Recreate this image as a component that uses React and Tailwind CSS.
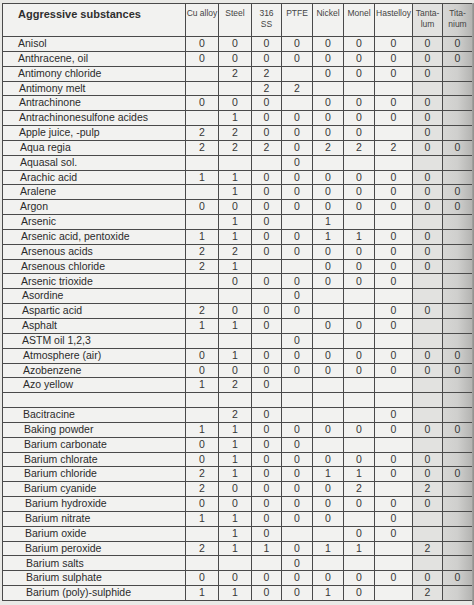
import React from "react";

const H = ["Cu alloy", "Steel", "316|SS", "PTFE", "Nickel", "Monel", "Hastelloy", "Tanta-|lum", "Tita-|nium"];

const R = [
  ["Anisol", "000000000"],
  ["Anthracene, oil", "000000000"],
  ["Antimony chloride", "_22_0000_"],
  ["Antimony melt", "__22_____"],
  ["Antrachinone", "000_0000_"],
  ["Antrachinonesulfone acides", "_1000000_"],
  ["Apple juice, -pulp", "220000_0_"],
  ["Aqua regia", "222022200"],
  ["Aquasal sol.", "___0_____"],
  ["Arachic acid", "11000000_"],
  ["Aralene", "_10000000"],
  ["Argon", "000000000"],
  ["Arsenic", "_10_1____"],
  ["Arsenic acid, pentoxide", "11001100_"],
  ["Arsenous acids", "22000000_"],
  ["Arsenous chloride", "21__0000_"],
  ["Arsenic trioxide", "_000000__"],
  ["Asordine", "___0_____"],
  ["Aspartic acid", "2000__00_"],
  ["Asphalt", "110_000__"],
  ["ASTM oil 1,2,3", "___0_____"],
  ["Atmosphere (air)", "010000000"],
  ["Azobenzene", "000000000"],
  ["Azo yellow", "120______"],
  ["", "_________"],
  ["Bacitracine", "_20___0__"],
  ["Baking powder", "110000000"],
  ["Barium carbonate", "0100_____"],
  ["Barium chlorate", "01000000_"],
  ["Barium chloride", "210011000"],
  ["Barium cyanide", "200002_2_"],
  ["Barium hydroxide", "00000000_"],
  ["Barium nitrate", "11000_0__"],
  ["Barium oxide", "_10__00__"],
  ["Barium peroxide", "211011_2_"],
  ["Barium salts", "___0_____"],
  ["Barium sulphate", "000000000"],
  ["Barium (poly)-sulphide", "110010_2_"],
];

const shade = (j) =>
  j === 7
    ? "bg-[#e2e2e0]"
    : j === 8
    ? "bg-gradient-to-r from-[#d7d7d5] via-[#cfcfcd] to-[#b4b4b2]"
    : "bg-[#f2f2f0]";

export default function App() {
  return (
    <div
      className="w-[474px] h-[605px] bg-[#e9e9e6] flex overflow-hidden"
      style={{ fontFamily: '"Liberation Sans", Arial, sans-serif' }}
    >
      <div className="ml-[2px] mt-[3px] flex">
        <div className="grid grid-cols-[183px_33px_33px_30px_31px_31px_31px_38px_30px_30px] grid-rows-[33px_repeat(38,minmax(0,1fr))] h-[598px] w-[470px] border-t border-l border-[#4a4a4a]">
          <div className="border-r border-b border-[#4a4a4a] bg-[#f2f2f0] pl-[15px] pt-[3px] text-[11px] leading-[14px] font-bold text-[#2f2f2f]">
            Aggressive substances
          </div>
          {H.map((h, j) => (
            <div
              key={h}
              className={`border-r border-b border-[#4a4a4a] ${shade(j)} pt-[4px] text-center text-[8.5px] leading-[11px] text-[#444] whitespace-nowrap`}
            >
              {h.split("|").map((l) => (
                <div key={l}>{l}</div>
              ))}
            </div>
          ))}
          {R.map(([name, v], i) => (
            <React.Fragment key={i}>
              <div
                className="border-r border-b border-[#4a4a4a] bg-[#f2f2f0] flex items-center text-[10.5px] text-[#2b2b2b] whitespace-nowrap"
                style={{ paddingLeft: 15 + Math.round((i * 8) / 37) }}
              >
                {name}
              </div>
              {v.split("").map((c, j) => (
                <div
                  key={j}
                  className={`border-r border-b border-[#4a4a4a] ${shade(j)} flex items-center justify-center text-[10.5px] text-[#363636]`}
                >
                  {c === "_" ? "" : c}
                </div>
              ))}
            </React.Fragment>
          ))}
        </div>
        <div className="w-[2px] bg-gradient-to-r from-[#a5a5a3] to-[#8c8c8a]" />
      </div>
    </div>
  );
}
